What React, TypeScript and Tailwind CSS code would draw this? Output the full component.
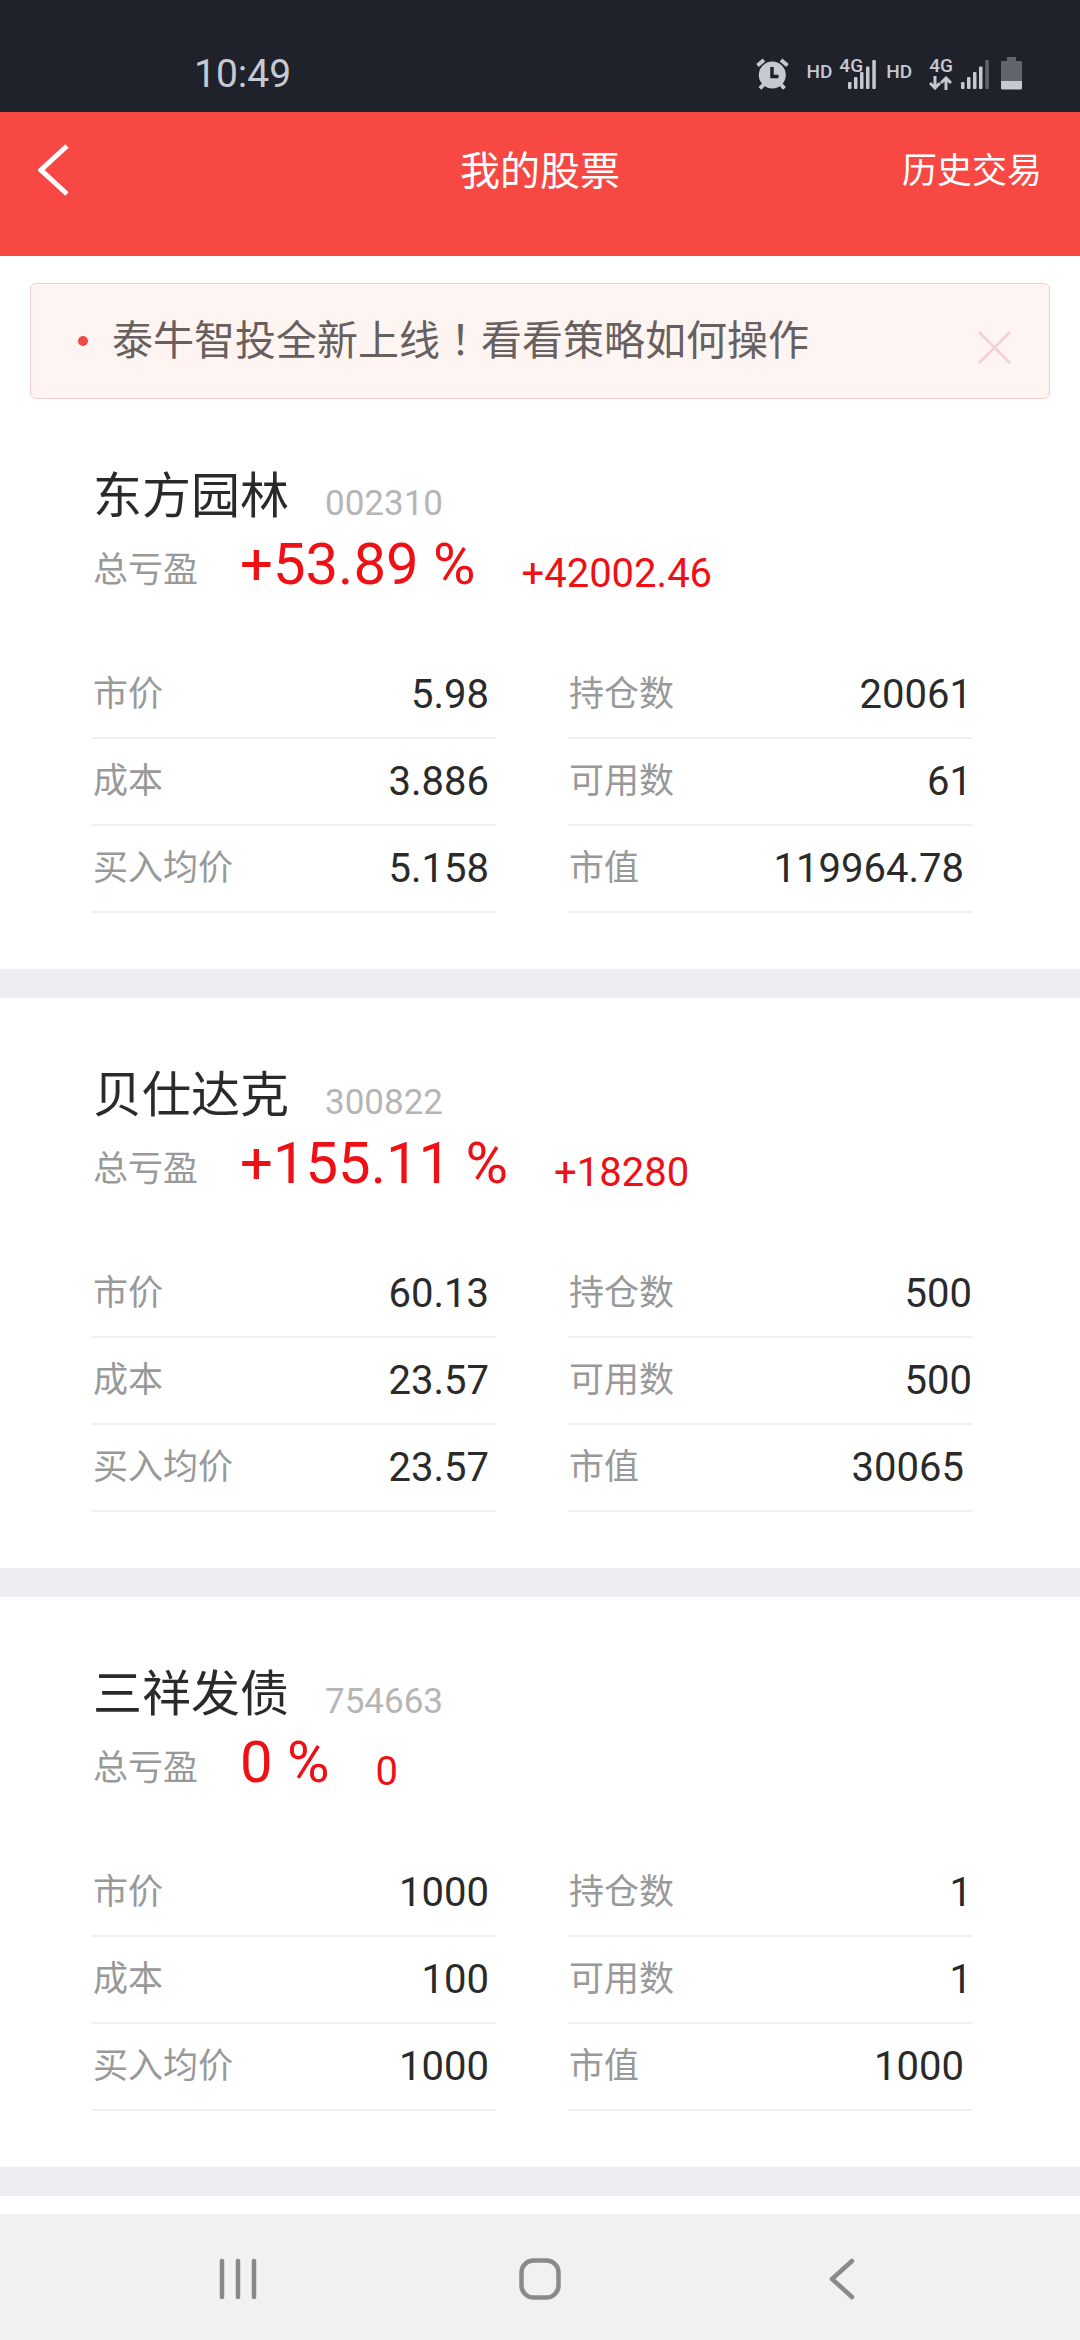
import React from "react";

type Field = { label: string; value: string };
type Stock = {
  name: string;
  code: string;
  percent: string;
  amount: string;
  left: Field[];
  right: Field[];
};

const makeStock = (
  name: string,
  code: string,
  percent: string,
  amount: string,
  [price, cost, avg]: string[],
  [held, usable, worth]: string[],
): Stock => ({
  name,
  code,
  percent,
  amount,
  left: [
    { label: "市价", value: price },
    { label: "成本", value: cost },
    { label: "买入均价", value: avg },
  ],
  right: [
    { label: "持仓数", value: held },
    { label: "可用数", value: usable },
    { label: "市值", value: worth },
  ],
});

const stocks: Stock[] = [
  makeStock("东方园林", "002310", "+53.89 %", "+42002.46", ["5.98", "3.886", "5.158"], ["20061", "61", "119964.78"]),
  makeStock("贝仕达克", "300822", "+155.11 %", "+18280", ["60.13", "23.57", "23.57"], ["500", "500", "30065"]),
  makeStock("三祥发债", "754663", "0 %", "0", ["1000", "100", "1000"], ["1", "1", "1000"]),
];

function AlarmIcon() {
  return (
    <svg width="34" height="32" viewBox="0 0 34 32" aria-label="闹钟">
      <g stroke="currentColor" strokeWidth="4">
        <path d="M1.5 7.5 8 2M31.500 7.500 25 2" />
        <path d="M8 26 4 30.500M24.500 26 28.500 30.500" />
      </g>
      <circle cx="16.300" cy="17" r="13.500" fill="currentColor" />
      <path d="M16 9v9.500h6.500" fill="none" stroke="#1f222b" strokeWidth="3.500" />
    </svg>
  );
}

function SignalIcon({ weak = false }: { weak?: boolean }) {
  return (
    <svg width="28" height="29" viewBox="0 0 28 29" fill="currentColor" aria-label="信号">
      <rect x="0" y="22" width="3.500" height="7" rx="1" />
      <rect x="6" y="17" width="3.500" height="12" rx="1" />
      <rect x="12" y="12" width="3.500" height="17" rx="1" />
      <rect x="18" y="6.500" width="3.500" height="22.500" rx="1" />
      <rect x="24.300" y="0" width="3.500" height="29" rx="1" opacity={weak ? 0.4 : 1} />
    </svg>
  );
}

function StatusBar() {
  return (
    <div className="flex h-28 items-end justify-between bg-[#1f222b] pr-[58px] pb-[22px] pl-[194px] text-[#c6c9d1]">
      <span className="text-[39px] leading-[32px]">10:49</span>
      <div className="flex h-[34px] items-end text-[19px] leading-5 font-medium">
        <AlarmIcon />
        <span className="ml-4 pb-2">HD</span>
        <span className="relative ml-[7px] flex h-[34px] w-[37px] items-end justify-end pb-px">
          <span className="absolute top-0 left-0">4G</span>
          <SignalIcon />
        </span>
        <span className="ml-[10px] pb-2">HD</span>
        <span className="ml-[17px] flex h-[34px] flex-col justify-between">
          <span className="leading-5">4G</span>
          <svg width="23" height="14" viewBox="0 0 23 14" fill="none" stroke="currentColor" strokeWidth="3">
            <path d="M6 0v12M1 7l5 5 5-5M17 14V2M12 7l5-5 5 5" />
          </svg>
        </span>
        <span className="ml-2 pb-px">
          <SignalIcon weak />
        </span>
        <svg className="ml-3" width="21" height="33" viewBox="0 0 21 33" fill="currentColor" aria-label="电量">
          <path d="M6 0h9v4h5q1 0 1 1v19H0V5q0-1 1-1h5z" opacity="0.400" />
          <path d="M0 24h21v7q0 1.500-1.500 1.500h-18Q0 32.500 0 31z" />
        </svg>
      </div>
    </div>
  );
}

function Header() {
  return (
    <header className="grid h-36 grid-cols-3 items-center bg-[#f74843] px-[38px] pb-6 text-white">
      <button type="button" aria-label="返回" className="justify-self-start pb-1">
        <svg width="31" height="52" viewBox="0 0 31 52" fill="none" stroke="currentColor" strokeWidth="5">
          <path d="M29 2 3 26l26 24" />
        </svg>
      </button>
      <h1 className="justify-self-center text-[40px] leading-[48px]">我的股票</h1>
      <a href="#history" className="justify-self-end text-[35px] leading-[48px]">
        历史交易
      </a>
    </header>
  );
}

function Notice() {
  return (
    <aside className="mx-[30px] mt-[27px] flex h-[116px] items-center rounded-md border border-[#ecd0d0] bg-[#fef5f3] pr-[38px] pl-[47px]">
      <span className="size-[10px] rounded-full bg-[#f04a44]" />
      <p className="ml-[24px] flex-1 pb-1 text-[41px] leading-[52px] text-[#67605e]">
        泰牛智投全新上线<span className="font-['Noto_Sans_CJK_TC']">！</span>看看策略如何操作
      </p>
      <button type="button" aria-label="关闭" className="pt-3">
        <svg width="33" height="33" viewBox="0 0 33 33" fill="none" stroke="#f3d0d3" strokeWidth="2.500">
          <path d="M1 1l31 31M32 1 1 32" />
        </svg>
      </button>
    </aside>
  );
}

function FieldList({ fields, valueClass }: { fields: Field[]; valueClass: string }) {
  return (
    <dl className={valueClass}>
      {fields.map((f) => (
        <div key={f.label} className="flex h-[87px] items-center justify-between border-b-2 border-[#f1f1f1] pl-px">
          <dt className="text-[35px] leading-[48px] text-[#999]">{f.label}</dt>
          <dd className="text-[40px] leading-[48px] text-[#2a2a2a]">{f.value}</dd>
        </div>
      ))}
    </dl>
  );
}

function StockCard({ stock }: { stock: Stock }) {
  return (
    <section className="border-b-[29px] border-[#eeeef2] pt-[71px] pr-[108px] pb-14 pl-[92px]">
      <div className="flex items-end gap-[36px] pl-px">
        <h2 className="text-[49px] leading-[54px] text-[#2a2a2a]">{stock.name}</h2>
        <span className="text-[35px] leading-[40px] text-[#b5b5b5]">{stock.code}</span>
      </div>
      <div className="mt-[10px] flex items-end pl-px text-[#ee1015]">
        <span className="text-[35px] leading-[46px] text-[#999]">总亏盈</span>
        <span className="ml-[42px] text-[58px] leading-[60px]">{stock.percent}</span>
        <span className="ml-[46px] text-[40px] leading-[40px]">{stock.amount}</span>
      </div>
      <div className="mt-[58px] grid grid-cols-2 gap-[72px]">
        <FieldList fields={stock.left} valueClass="[&_dd]:pr-[7px]" />
        <FieldList fields={stock.right} valueClass="[&>div:last-child>dd]:pr-2" />
      </div>
    </section>
  );
}

function NavBar() {
  return (
    <nav className="flex h-[126px] items-center justify-center gap-[260px] bg-[#f1f1f1] pt-1 text-[#8a8a8a]">
      <button type="button" aria-label="最近任务">
        <svg width="42" height="42" viewBox="0 0 42 42" stroke="currentColor" strokeWidth="4.500" strokeLinecap="round">
          <path d="M5 3v36M21 3v36M37 3v36" />
        </svg>
      </button>
      <button type="button" aria-label="主屏幕">
        <svg width="42" height="42" viewBox="0 0 42 42" fill="none" stroke="currentColor" strokeWidth="4.500">
          <rect x="2.500" y="2.500" width="37" height="37" rx="12" />
        </svg>
      </button>
      <button type="button" aria-label="返回">
        <svg width="42" height="42" viewBox="0 0 42 42" fill="none" stroke="currentColor" strokeWidth="4.500" strokeLinecap="round" strokeLinejoin="round">
          <path d="M31 3 11 21l20 18" />
        </svg>
      </button>
    </nav>
  );
}

export default function App() {
  return (
    <div className="flex min-h-screen flex-col bg-white font-[Roboto,'Noto_Sans_CJK_SC',sans-serif]">
      <StatusBar />
      <Header />
      <main className="flex-1">
        <Notice />
        {stocks.map((s) => (
          <StockCard key={s.code} stock={s} />
        ))}
      </main>
      <NavBar />
    </div>
  );
}
